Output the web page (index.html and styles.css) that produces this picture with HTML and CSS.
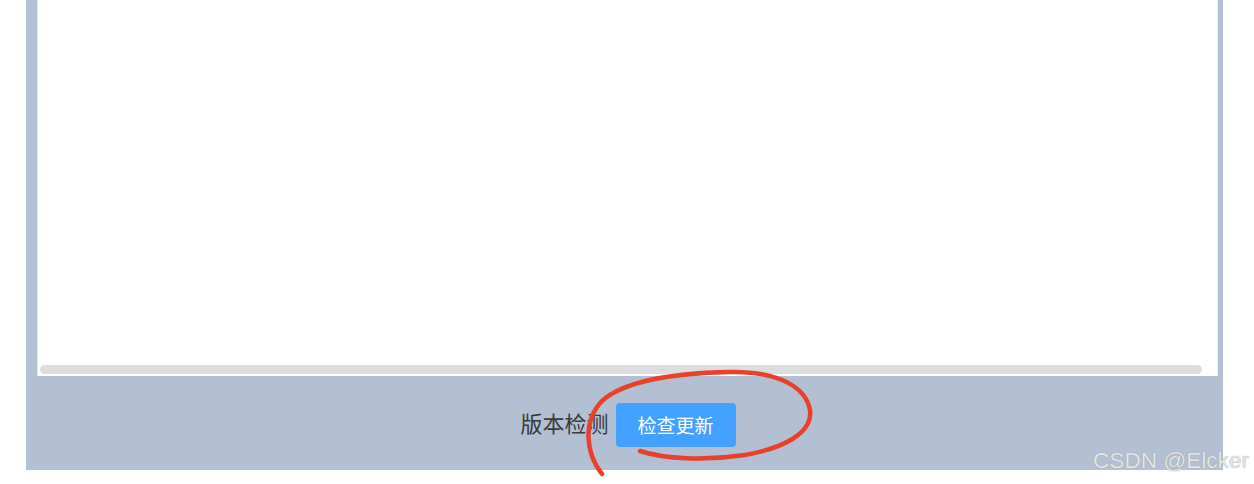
FILE: index.html
```html
<!DOCTYPE html>
<html lang="zh">
<head>
<meta charset="utf-8">
<link rel="stylesheet" href="styles.css">
</head>
<body>
<div class="page">
  <div class="panel">
    <div class="content">
      <div class="scroll-thumb"></div>
    </div>
    <div class="footer">
      <span class="label">版本检测</span>
      <button class="btn">检查更新</button>
    </div>
  </div>
  <svg class="mark" width="1254" height="484" viewBox="0 0 1254 484">
    <path d="M 602 474 C 586 454, 582 422, 602 401 C 624 381, 675 373, 730 372 C 780 371, 806 388, 810 410 C 813 433, 784 448, 745 455 C 705 461, 664 459, 640 451" fill="none" stroke="#e8402a" stroke-width="4.5" stroke-linecap="round"/>
  </svg>
  <div class="watermark">CSDN @Elcker</div>
</div>
</body>
</html>
```
FILE: styles.css
```css
html, body {
  margin: 0;
  padding: 0;
  background: #ffffff;
}
.page {
  position: relative;
  width: 1254px;
  height: 484px;
  overflow: hidden;
  font-family: "Noto Sans CJK SC", "Liberation Sans", sans-serif;
}
.panel {
  margin-left: 26px;
  width: 1197px;
  height: 470px;
  background: #b3c0d3;
  display: flex;
  flex-direction: column;
}
.content {
  margin-left: 11px;
  margin-right: 5px;
  height: 376px;
  box-sizing: border-box;
  background: #ffffff;
  border-left: 1px solid #e3e8f0;
  border-right: 1px solid #e3e8f0;
  display: flex;
  flex-direction: column;
  justify-content: flex-end;
}
.scroll-thumb {
  height: 9px;
  margin: 0 15px 2px 2px;
  background: #dcdddf;
  border-radius: 5px;
}
.footer {
  flex: 1;
  display: flex;
  align-items: center;
  justify-content: center;
  gap: 7px;
  padding-top: 4px;
  padding-left: 7px;
}
.label {
  font-size: 22px;
  color: #3a3a3a;
  line-height: 1;
  padding-bottom: 6px;
}
.btn {
  width: 120px;
  height: 44px;
  border: none;
  border-radius: 4px;
  background: #42a0ff;
  color: #ffffff;
  font-family: "Noto Sans CJK SC", "Liberation Sans", sans-serif;
  font-size: 19px;
  padding: 0 0 2px 0;
  line-height: 1;
}
.mark {
  position: absolute;
  left: 0;
  top: 0;
  pointer-events: none;
}
.watermark {
  position: absolute;
  left: 1093px;
  top: 448px;
  font-family: "Liberation Sans", Arial, sans-serif;
  font-size: 22.6px;
  line-height: 26px;
  color: #e4e4e4;
  text-shadow: 0 0 1px #8a8a8a;
  white-space: nowrap;
}
```
